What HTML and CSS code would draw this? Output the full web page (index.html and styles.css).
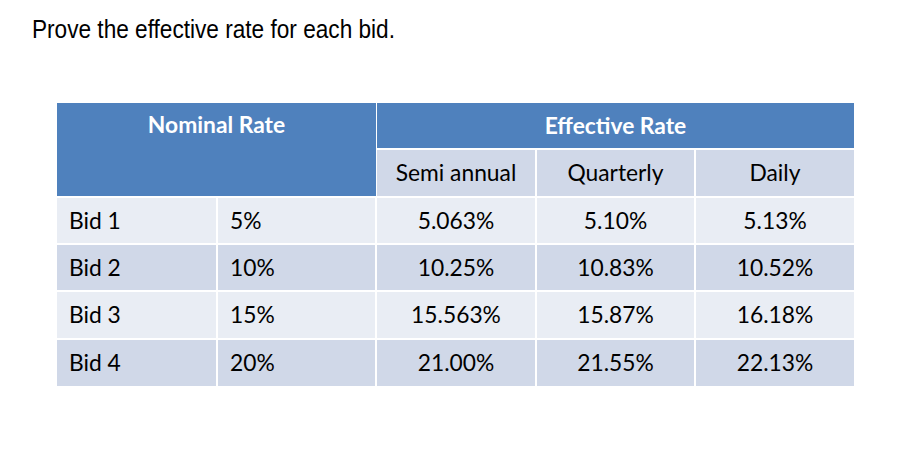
FILE: index.html
```html
<!DOCTYPE html>
<html>
<head>
<meta charset="utf-8">
<link rel="stylesheet" href="styles.css">
</head>
<body>
<div class="page">
  <h1 class="title"><span class="title-text">Prove the effective rate for each bid.</span></h1>
  <div class="rates">
    <div class="cell head nominal">Nominal Rate</div>
    <div class="cell head effective">Effective Rate</div>
    <div class="cell sub">Semi annual</div>
    <div class="cell sub">Quarterly</div>
    <div class="cell sub">Daily</div>

    <div class="cell light left">Bid 1</div>
    <div class="cell light left">5%</div>
    <div class="cell light">5.063%</div>
    <div class="cell light">5.10%</div>
    <div class="cell light">5.13%</div>

    <div class="cell dark left">Bid 2</div>
    <div class="cell dark left">10%</div>
    <div class="cell dark">10.25%</div>
    <div class="cell dark">10.83%</div>
    <div class="cell dark">10.52%</div>

    <div class="cell light left">Bid 3</div>
    <div class="cell light left">15%</div>
    <div class="cell light">15.563%</div>
    <div class="cell light">15.87%</div>
    <div class="cell light">16.18%</div>

    <div class="cell dark left">Bid 4</div>
    <div class="cell dark left">20%</div>
    <div class="cell dark">21.00%</div>
    <div class="cell dark">21.55%</div>
    <div class="cell dark">22.13%</div>
  </div>
</div>
</body>
</html>
```
FILE: styles.css
```css
html, body {
  margin: 0;
  padding: 0;
  background: #ffffff;
}
.page {
  width: 910px;
  height: 449px;
  padding: 14px 0 0 32px;
  box-sizing: border-box;
}
.title {
  margin: 0;
  height: 30px;
  font-family: "Liberation Sans", Arial, sans-serif;
  font-weight: normal;
  font-size: 26px;
  line-height: 30px;
  color: #000;
  white-space: nowrap;
}
.title-text {
  display: inline-block;
  transform: scaleX(0.87);
  transform-origin: left center;
}
.rates {
  margin: 59px 0 0 25px;
  display: grid;
  grid-template-columns: 159px 157px 158px 157px 158px;
  grid-template-rows: 45px 46px 45px 45px 46px 46px;
  gap: 2px;
  width: 797px;
  font-family: Lato, "Open Sans", sans-serif;
  font-size: 22.8px;
  color: #000;
}
.cell {
  display: flex;
  align-items: center;
  justify-content: center;
  padding-bottom: 2px;
  box-sizing: border-box;
}
.head {
  background: #4f81bd;
  color: #fff;
  font-weight: bold;
}
.nominal {
  grid-column: 1 / 3;
  grid-row: 1 / 3;
  align-items: flex-start;
  padding-top: 7px;
  margin-right: -1px;
}
.effective {
  grid-column: 3 / 6;
  grid-row: 1 / 2;
}
.sub {
  background: #d0d8e8;
}
.light {
  background: #e9edf4;
}
.dark {
  background: #d0d8e8;
}
.left {
  justify-content: flex-start;
  padding-left: 12px;
}
```
